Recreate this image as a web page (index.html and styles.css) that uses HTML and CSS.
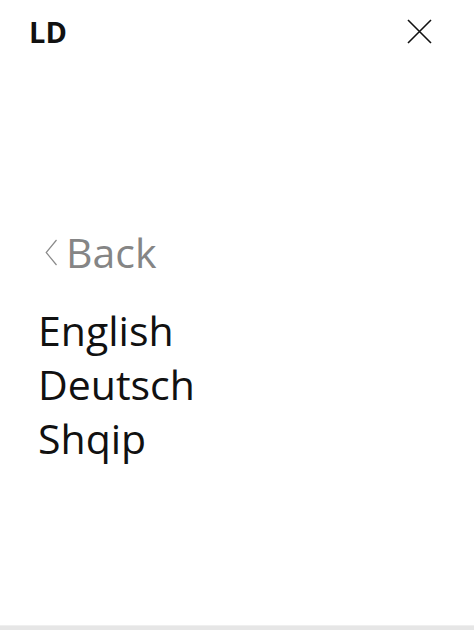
FILE: index.html
```html
<!DOCTYPE html>
<html lang="en">
<head>
<meta charset="utf-8">
<title>Language</title>
<link rel="stylesheet" href="styles.css">
</head>
<body>
<div class="page">
  <header class="header">
    <div class="logo">LD</div>
    <button class="close" aria-label="Close">
      <svg width="25" height="25" viewBox="0 0 25 25"><path d="M1 1L24 24M24 1L1 24" stroke="#111" stroke-width="1.6" fill="none"/></svg>
    </button>
  </header>
  <nav class="menu">
    <a class="back" href="#">
      <svg class="chev" width="12" height="27" viewBox="0 0 12 27"><path d="M11.5 1L1.2 13.5L11.5 26" stroke="#8a8a8a" stroke-width="1.2" fill="none"/></svg>
      <span>Back</span>
    </a>
    <ul class="langs">
      <li>English</li>
      <li>Deutsch</li>
      <li>Shqip</li>
    </ul>
  </nav>
</div>
<div class="bottom-bar"></div>
</body>
</html>
```
FILE: styles.css
```css
html, body {
  margin: 0;
  padding: 0;
  background: #fff;
}
body {
  font-family: "Open Sans", "Noto Sans", sans-serif;
  color: #111;
  height: 630px;
  display: flex;
  flex-direction: column;
  overflow: hidden;
}
.page {
  flex: 1;
  display: flex;
  flex-direction: column;
}
.header {
  display: flex;
  justify-content: space-between;
  align-items: center;
  padding: 12px 42px 0 29px;
  height: 38px;
}
.logo {
  font-weight: 700;
  font-size: 29px;
  letter-spacing: 0;
  line-height: 1;
}
.close {
  border: 0;
  background: none;
  padding: 0;
  display: flex;
}
.menu {
  padding: 175px 0 0 38px;
}
.back {
  display: flex;
  align-items: center;
  gap: 9px;
  color: #858585;
  text-decoration: none;
  font-size: 41px;
  line-height: 54px;
  margin-left: 7px;
}
.chev {
  margin-top: 0;
}
.langs {
  list-style: none;
  margin: 24px 0 0;
  padding: 0;
  font-size: 41px;
  line-height: 54px;
  color: #111;
}
.bottom-bar {
  height: 4px;
  background: #e6e6e6;
  border-top: 1px solid #efefef;
}
```
